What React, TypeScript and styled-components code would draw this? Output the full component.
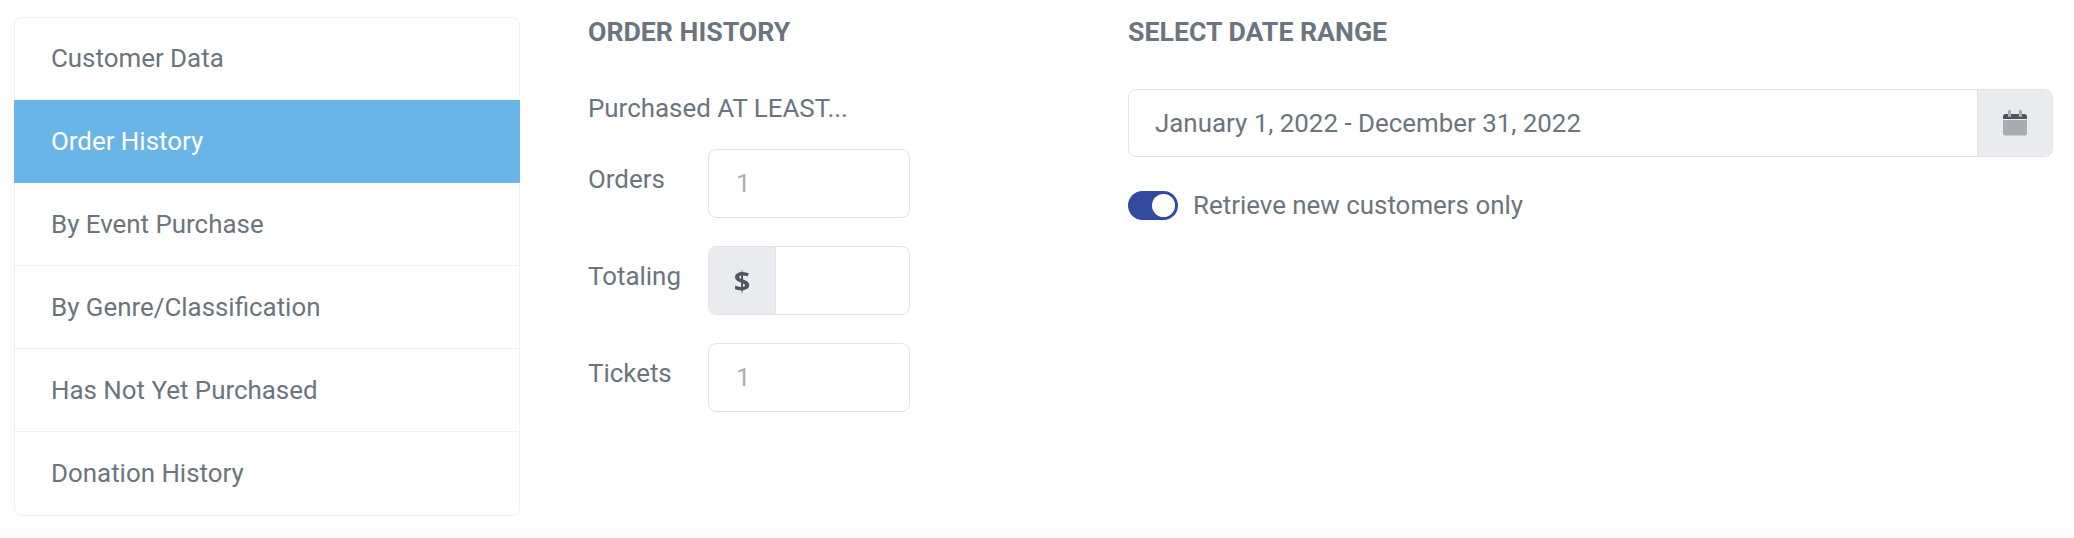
import React from "react";
import styled, { createGlobalStyle } from "styled-components";

const Global = createGlobalStyle`
  html, body { margin: 0; padding: 0; background: #fff; }
  body { font-family: Roboto, "Liberation Sans", sans-serif; color: #6c757d; }
  #root { width: 2074px; height: 538px; overflow: hidden; }
`;

const Page = styled.div`
  width: 2074px;
  height: 538px;
  box-sizing: border-box;
  padding: 17px 21px 0 14px;
  display: flex;
  align-items: flex-start;
  background: linear-gradient(to bottom, #fff 0, #fff 522px, #fbfbfc 538px);
`;

const Menu = styled.nav`
  width: 506px;
  flex: none;
  box-sizing: border-box;
  border: 1px solid #eff1f4;
  border-radius: 8px;
  background: #fff;
  display: flex;
  flex-direction: column;
`;

const MenuItem = styled.div<{ $active?: boolean }>`
  height: 83px;
  box-sizing: border-box;
  padding-left: 36px;
  display: flex;
  align-items: center;
  font-size: 25.9px;
  color: ${(p) => (p.$active ? "#fff" : "#6c757d")};
  background: ${(p) => (p.$active ? "#69b5e8" : "transparent")};
  margin: ${(p) => (p.$active ? "0 -1px" : "0")};
  padding-left: ${(p) => (p.$active ? "37px" : "36px")};
  border-bottom: 1px solid ${(p) => (p.$active ? "#69b5e8" : "#eff1f4")};
  &:first-child { height: 82px; padding-bottom: 2px; }
  &:last-child { border-bottom: none; padding-bottom: 2px; }
`;

const OrderColumn = styled.section`
  width: 540px;
  flex: none;
  margin-left: 68px;
`;

const DateColumn = styled.section`
  flex: 1;
`;

const Heading = styled.h2`
  margin: 0;
  font-size: 26.7px;
  line-height: 30px;
  font-weight: 700;
  text-transform: uppercase;
  color: #6c757d;
`;

const Lead = styled.div`
  margin-top: 46px;
  font-size: 25.9px;
  line-height: 30px;
`;

const FieldRows = styled.div`
  margin-top: 26px;
  display: flex;
  flex-direction: column;
  gap: 28px;
`;

const FieldRow = styled.div`
  display: flex;
  align-items: flex-start;
`;

const FieldLabel = styled.label`
  width: 120px;
  font-size: 25.9px;
  line-height: 30px;
  padding-top: 15px;
`;

const InputBox = styled.div`
  width: 202px;
  height: 69px;
  box-sizing: border-box;
  border: 1px solid #e1e3e8;
  border-radius: 8px;
  background: #fff;
  display: flex;
  overflow: hidden;
`;

const Placeholder = styled.span`
  padding-left: 27px;
  font-size: 25.9px;
  line-height: 67px;
  color: #aab0b7;
`;

const Addon = styled.div`
  width: 67px;
  flex: none;
  background: #e9ebef;
  border-right: 1px solid #e1e3e8;
  box-sizing: border-box;
  display: flex;
  align-items: center;
  justify-content: center;
`;

const DollarGlyph = styled.span`
  font-family: "Open Sans", Roboto, sans-serif;
  font-size: 29px;
  line-height: 36px;
  font-weight: 700;
  color: transparent;
  background: linear-gradient(to bottom, #b4b8bd 0, #b4b8bd 9px, #50565f 9px, #50565f 28px, #b4b8bd 28px, #b4b8bd 36px);
  -webkit-background-clip: text;
  background-clip: text;
`;

const DateInput = styled.div`
  margin-top: 42px;
  height: 68px;
  box-sizing: border-box;
  border: 1px solid #e1e3e8;
  border-radius: 8px;
  display: flex;
  overflow: hidden;
`;

const DateText = styled.div`
  flex: 1;
  padding-left: 26px;
  font-size: 25.9px;
  line-height: 67px;
`;

const DateAddon = styled.div`
  width: 75px;
  flex: none;
  box-sizing: border-box;
  background: #e9ebef;
  border-left: 1px solid #e1e3e8;
  display: flex;
  align-items: center;
  justify-content: center;
`;

const ToggleRow = styled.div`
  margin-top: 33px;
  display: flex;
  align-items: center;
  gap: 15px;
`;

const Toggle = styled.div`
  width: 50px;
  height: 29px;
  border-radius: 15px;
  background: #324b9e;
  box-sizing: border-box;
  padding: 3px;
  display: flex;
  justify-content: flex-end;
`;

const Knob = styled.div`
  width: 23px;
  height: 23px;
  border-radius: 50%;
  background: #fff;
`;

const ToggleLabel = styled.span`
  font-size: 25.9px;
  line-height: 30px;
`;

const CalendarIcon = () => (
  <svg width="24" height="26" viewBox="0 0 24 26" aria-hidden="true">
    <rect x="5" y="0" width="3" height="6" rx="1.2" fill="#a8acb1" />
    <rect x="16" y="0" width="3" height="6" rx="1.2" fill="#a8acb1" />
    <path d="M0 9V6.5A2.500 2.500 0 0 1 2.500 4H5v2.500h3V4h8v2.500h3V4h2.500A2.500 2.500 0 0 1 24 6.500V9z" fill="#4f555d" />
    <path d="M0 10h24v13a2.500 2.500 0 0 1-2.500 2.500h-19A2.500 2.500 0 0 1 0 23z" fill="#a8acb1" />
  </svg>
);

const items = ["Customer Data", "Order History", "By Event Purchase", "By Genre/Classification", "Has Not Yet Purchased", "Donation History"];

export default function App() {
  return (
    <Page>
      <Global />
      <Menu>
        {items.map((t) => (
          <MenuItem key={t} $active={t === "Order History"}>{t}</MenuItem>
        ))}
      </Menu>
      <OrderColumn>
        <Heading>Order History</Heading>
        <Lead>Purchased AT LEAST...</Lead>
        <FieldRows>
          <FieldRow>
            <FieldLabel>Orders</FieldLabel>
            <InputBox><Placeholder>1</Placeholder></InputBox>
          </FieldRow>
          <FieldRow>
            <FieldLabel>Totaling</FieldLabel>
            <InputBox><Addon><DollarGlyph>$</DollarGlyph></Addon></InputBox>
          </FieldRow>
          <FieldRow>
            <FieldLabel>Tickets</FieldLabel>
            <InputBox><Placeholder>1</Placeholder></InputBox>
          </FieldRow>
        </FieldRows>
      </OrderColumn>
      <DateColumn>
        <Heading>Select Date Range</Heading>
        <DateInput>
          <DateText>January 1, 2022 - December 31, 2022</DateText>
          <DateAddon><CalendarIcon /></DateAddon>
        </DateInput>
        <ToggleRow>
          <Toggle><Knob /></Toggle>
          <ToggleLabel>Retrieve new customers only</ToggleLabel>
        </ToggleRow>
      </DateColumn>
    </Page>
  );
}
